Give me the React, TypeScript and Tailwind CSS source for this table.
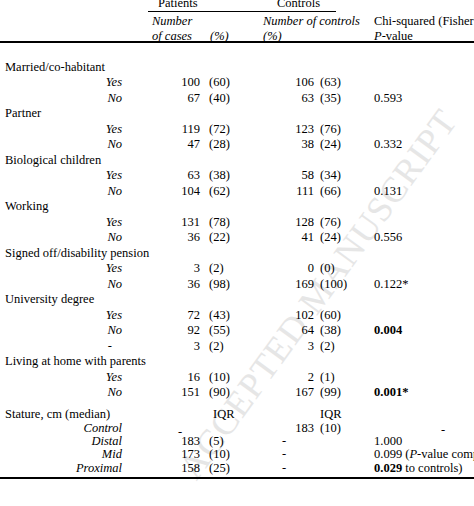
import React from "react";

type Row = {
  label?: string;
  sub?: string;
  pn?: string;
  pp?: string;
  cn?: string;
  cp?: string;
  pv?: React.ReactNode;
};

const rows: Row[] = [
  { label: "Married/co-habitant" },
  { sub: "Yes", pn: "100", pp: "(60)", cn: "106", cp: "(63)" },
  { sub: "No", pn: "67", pp: "(40)", cn: "63", cp: "(35)", pv: "0.593" },
  { label: "Partner" },
  { sub: "Yes", pn: "119", pp: "(72)", cn: "123", cp: "(76)" },
  { sub: "No", pn: "47", pp: "(28)", cn: "38", cp: "(24)", pv: "0.332" },
  { label: "Biological children" },
  { sub: "Yes", pn: "63", pp: "(38)", cn: "58", cp: "(34)" },
  { sub: "No", pn: "104", pp: "(62)", cn: "111", cp: "(66)", pv: "0.131" },
  { label: "Working" },
  { sub: "Yes", pn: "131", pp: "(78)", cn: "128", cp: "(76)" },
  { sub: "No", pn: "36", pp: "(22)", cn: "41", cp: "(24)", pv: "0.556" },
  { label: "Signed off/disability pension" },
  { sub: "Yes", pn: "3", pp: "(2)", cn: "0", cp: "(0)" },
  { sub: "No", pn: "36", pp: "(98)", cn: "169", cp: "(100)", pv: "0.122*" },
  { label: "University degree" },
  { sub: "Yes", pn: "72", pp: "(43)", cn: "102", cp: "(60)" },
  { sub: "No", pn: "92", pp: "(55)", cn: "64", cp: "(38)", pv: <b>0.004</b> },
  { sub: "-", pn: "3", pp: "(2)", cn: "3", cp: "(2)" },
  { label: "Living at home with parents" },
  { sub: "Yes", pn: "16", pp: "(10)", cn: "2", cp: "(1)" },
  { sub: "No", pn: "151", pp: "(90)", cn: "167", cp: "(99)", pv: <b>0.001*</b> },
];

function DataRow({ r }: { r: Row }) {
  if (r.label) {
    return (
      <div className="flex items-center h-[15.5px] pl-[5px] whitespace-nowrap">
        {r.label}
      </div>
    );
  }
  return (
    <div className="flex items-center h-[15.5px] whitespace-nowrap">
      <div
        className={`w-[122px] shrink-0 text-right italic ${r.sub === "-" ? "pr-[10px]" : ""}`}
      >
        {r.sub}
      </div>
      <div className="w-[78px] shrink-0 text-right">{r.pn}</div>
      <div className="w-[54px] shrink-0 pl-[9px]">{r.pp}</div>
      <div className="w-[60px] shrink-0 text-right">{r.cn}</div>
      <div className="w-[60px] shrink-0 pl-[6px]">{r.cp}</div>
      <div className="shrink-0">{r.pv}</div>
    </div>
  );
}

function StatRow({
  sub,
  n,
  p,
  pv,
}: {
  sub: string;
  n: string;
  p: string;
  pv: React.ReactNode;
}) {
  return (
    <div className="flex items-center h-[13.3px] whitespace-nowrap">
      <div className="w-[122px] shrink-0 text-right italic">{sub}</div>
      <div className="w-[78px] shrink-0 text-right">{n}</div>
      <div className="w-[82px] shrink-0 pl-[9px]">{p}</div>
      <div className="w-[92px] shrink-0">-</div>
      <div className="shrink-0">{pv}</div>
    </div>
  );
}

export default function App() {
  return (
    <div className="relative w-[474px] h-[506px] overflow-hidden bg-white text-black text-[12.5px] leading-none font-['Liberation_Serif','Times_New_Roman',serif]">
      {/* watermark */}
      <div className="absolute left-[318px] top-[294px] -translate-x-1/2 -translate-y-1/2 rotate-[-54deg] whitespace-nowrap text-[36px] tracking-[1px] text-[#e6e6e6]">
        ACCEPTED MANUSCRIPT
      </div>

      <div className="relative">
        {/* header */}
        <div className="flex items-end h-[9px] whitespace-nowrap">
          <div className="w-[158px] shrink-0" />
          <div className="w-[119px] shrink-0">Patients</div>
          <div className="shrink-0">Controls</div>
        </div>
        <div className="ml-[148px] mt-[2px] w-[188px] h-px bg-black" />
        <div className="flex whitespace-nowrap mt-[2px] leading-[15px]">
          <div className="w-[152px] shrink-0" />
          <div className="w-[58px] shrink-0 italic">
            <div>Number</div>
            <div>of cases</div>
          </div>
          <div className="w-[53px] shrink-0 italic">
            <div>&nbsp;</div>
            <div>(%)</div>
          </div>
          <div className="w-[111px] shrink-0 italic">
            <div>Number of controls</div>
            <div>(%)</div>
          </div>
          <div className="shrink-0">
            <div>Chi-squared (Fisher's exact test)</div>
            <div>
              <i>P</i>-value
            </div>
          </div>
        </div>
        <div className="mt-[-3px] h-[2px] bg-black" />

        {/* body */}
        <div className="h-[16px]" />
        {rows.map((r, i) => (
          <DataRow key={i} r={r} />
        ))}

        <div className="h-[8px]" />
        <div className="flex items-center h-[13.3px] whitespace-nowrap">
          <div className="w-[213px] shrink-0 pl-[5px]">Stature, cm (median)</div>
          <div className="w-[107px] shrink-0">IQR</div>
          <div className="shrink-0">IQR</div>
        </div>
        <div className="flex items-center h-[13.3px] whitespace-nowrap">
          <div className="w-[122px] shrink-0 text-right italic">Control</div>
          <div className="w-[56px] shrink-0" />
          <div className="w-[76px] shrink-0 pt-[8px]">-</div>
          <div className="w-[60px] shrink-0 text-right">183</div>
          <div className="w-[60px] shrink-0 pl-[6px]">(10)</div>
          <div className="shrink-0 pl-[67px] pt-[4px]">-</div>
        </div>
        <StatRow sub="Distal" n="183" p="(5)" pv="1.000" />
        <StatRow
          sub="Mid"
          n="173"
          p="(10)"
          pv={
            <>
              0.099 (<i>P</i>-value compared
            </>
          }
        />
        <StatRow
          sub="Proximal"
          n="158"
          p="(25)"
          pv={
            <>
              <b>0.029</b> to controls)
            </>
          }
        />
        <div className="mt-[3px] h-[2px] bg-black" />
      </div>
    </div>
  );
}
